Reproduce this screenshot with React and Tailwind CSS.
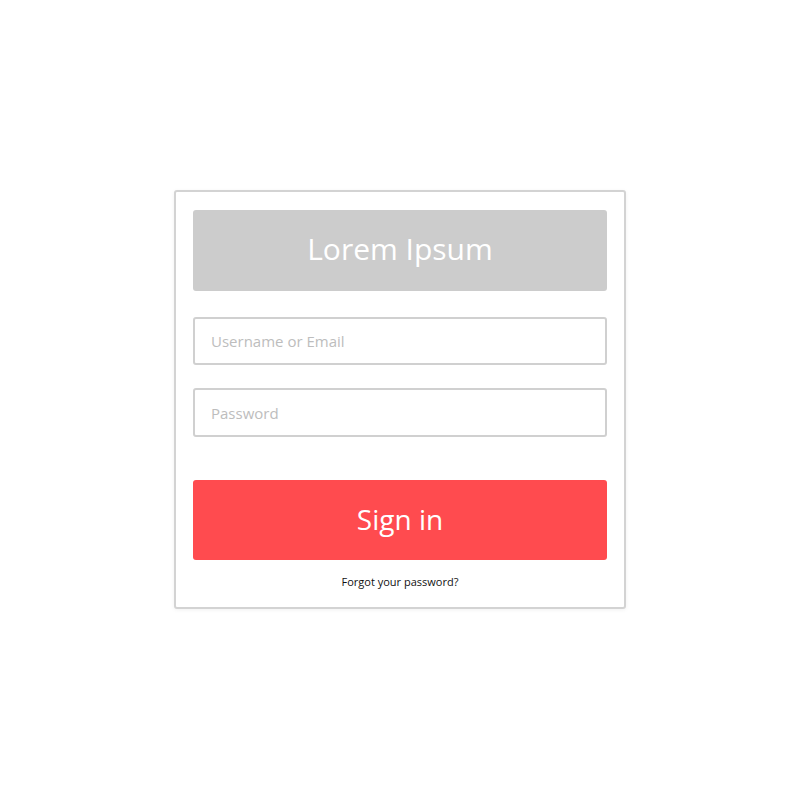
import React from 'react';

export default function App() {
  return (
    <div className="min-h-screen bg-white pt-[190px] font-['Open_Sans',_sans-serif]">
      {/* Login card */}
      <div className="ml-[174px] w-[452px] rounded-[3px] border-2 border-[#d3d3d3] bg-white px-[17px] pt-[18px] pb-[18px] shadow-[0_1px_4px_rgba(0,0,0,0.06)]">
        <div className="flex h-[81px] items-center justify-center rounded-[3px] bg-[#cccccc] pb-[4px]">
          <h1 className="text-[30px] leading-none text-white">Lorem Ipsum</h1>
        </div>

        <input
          type="text"
          placeholder="Username or Email"
          className="mt-[26px] block h-[48px] w-full rounded-[3px] border-2 border-[#d0d0d0] bg-white px-[16px] text-[15px] outline-none placeholder:text-[#bdbdbd]"
        />
        <input
          type="password"
          placeholder="Password"
          className="mt-[23px] block h-[49px] w-full rounded-[3px] border-2 border-[#d0d0d0] bg-white px-[16px] text-[15px] outline-none placeholder:text-[#bdbdbd]"
        />

        <button className="mt-[43px] flex h-[80px] w-full items-center justify-center rounded-[3px] bg-[#ff4b4f] pb-[3px] text-[28px] text-white">
          Sign in
        </button>

        <p className="mt-[15px] text-center text-[11px] leading-[14px] text-[#111]">
          Forgot your password?
        </p>
      </div>
    </div>
  );
}
